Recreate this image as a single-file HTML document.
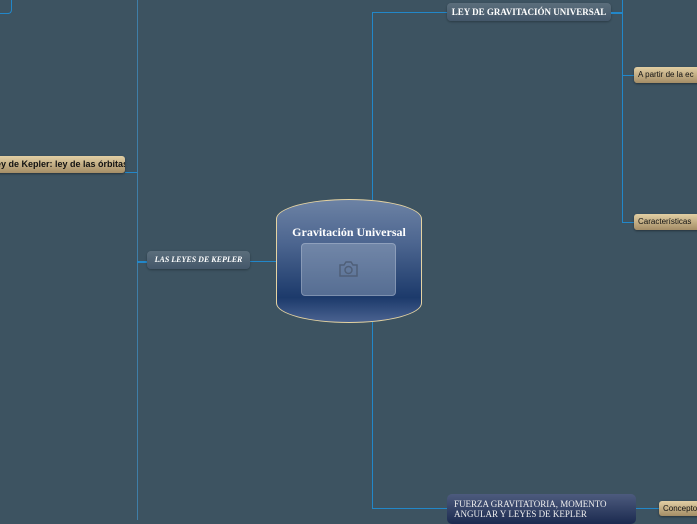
<!DOCTYPE html>
<html><head><meta charset="utf-8"><style>
body{margin:0;width:697px;height:520px;background:#3d5361;position:relative;overflow:hidden;font-family:"Liberation Serif",serif}
.l{position:absolute;background:#2287c9}
.tan{position:absolute;background:linear-gradient(#e2cfa4,#a48d66);border-radius:3px;color:#111;font-family:"Liberation Sans",sans-serif;font-size:8px;line-height:16px;white-space:nowrap;overflow:hidden;box-shadow:0 1px 2px rgba(0,0,0,.4);padding-left:4px;box-sizing:border-box}
.gr{position:absolute;background:linear-gradient(#5b6e7c,#44576a);border-radius:4px;color:#fff;font-size:9px;text-align:center;box-shadow:0 1px 2px rgba(0,0,0,.3);font-weight:bold}
</style></head><body>
<div class="l" style="left:0;top:13px;width:9px;height:1px"></div>
<div style="position:absolute;left:-2px;top:-2px;width:13px;height:15px;border:1px solid #2287c9;border-top:none;border-left:none;border-bottom-right-radius:4px"></div>
<div class="l" style="left:137px;top:0;width:1px;height:520px;background:#3f7ea8"></div>
<div class="l" style="left:125px;top:172px;width:12px;height:1px"></div>
<div class="tan" style="left:-8px;top:156px;width:133px;height:17px;font-size:9px;font-weight:bold;line-height:17px">ey de Kepler: ley de las órbitas</div>
<div class="l" style="left:137px;top:261px;width:10px;height:2px"></div>
<div class="l" style="left:250px;top:261px;width:27px;height:1px"></div>
<div class="gr" style="left:147px;top:251px;width:103px;height:18px;line-height:18px;font-style:italic;font-size:8px">LAS LEYES DE KEPLER</div>
<div class="l" style="left:372px;top:12px;width:1px;height:188px"></div>
<div class="l" style="left:372px;top:322px;width:1px;height:187px"></div>
<div class="l" style="left:372px;top:12px;width:75px;height:1px"></div>
<div class="l" style="left:372px;top:508px;width:75px;height:1px"></div>
<div class="gr" style="left:447px;top:3px;width:164px;height:18px;line-height:18px">LEY DE GRAVITACIÓN UNIVERSAL</div>
<div class="l" style="left:611px;top:12px;width:12px;height:2px"></div>
<div class="l" style="left:622px;top:0;width:1px;height:222px"></div>
<div class="l" style="left:622px;top:75px;width:12px;height:1px"></div>
<div class="l" style="left:622px;top:222px;width:12px;height:1px"></div>
<div class="tan" style="left:634px;top:67px;width:70px;height:16px">A partir de la ec</div>
<div class="tan" style="left:634px;top:214px;width:70px;height:16px">Características</div>
<div style="position:absolute;left:447px;top:494px;width:189px;height:30px;border-radius:5px;background:linear-gradient(#4d5b7e,#1b2a4f);color:#eee;font-size:9px;line-height:10px;padding:5px 7px;box-sizing:border-box">FUERZA GRAVITATORIA, MOMENTO ANGULAR Y LEYES DE KEPLER</div>
<div class="l" style="left:636px;top:508px;width:23px;height:1px"></div>
<div class="tan" style="left:659px;top:501px;width:45px;height:15px;line-height:15px">Conceptos</div>
<div style="position:absolute;left:276px;top:199px;width:146px;height:124px;box-sizing:border-box;border:1.5px solid #e5d3a2;border-radius:50%/16%;background:linear-gradient(#6c82a4 0%,#4d6690 35%,#1c3a6b 80%,#4a6290 100%)"></div>
<div style="position:absolute;left:276px;top:225px;width:146px;text-align:center;color:#fff;font-size:12px;font-weight:bold">Gravitación Universal</div>
<div style="position:absolute;left:301px;top:243px;width:95px;height:53px;border-radius:4px;background:rgba(170,185,205,.4);border:1px solid rgba(200,210,225,.35);box-sizing:border-box"></div>
<svg style="position:absolute;left:338px;top:260px" width="21" height="18" viewBox="0 0 21 18"><path d="M2 5h4l2-3h5l2 3h4v11H2z" fill="none" stroke="#4f5f78" stroke-width="1.5"/><circle cx="10.5" cy="10" r="3.5" fill="none" stroke="#4f5f78" stroke-width="1.5"/></svg>
</body></html>
